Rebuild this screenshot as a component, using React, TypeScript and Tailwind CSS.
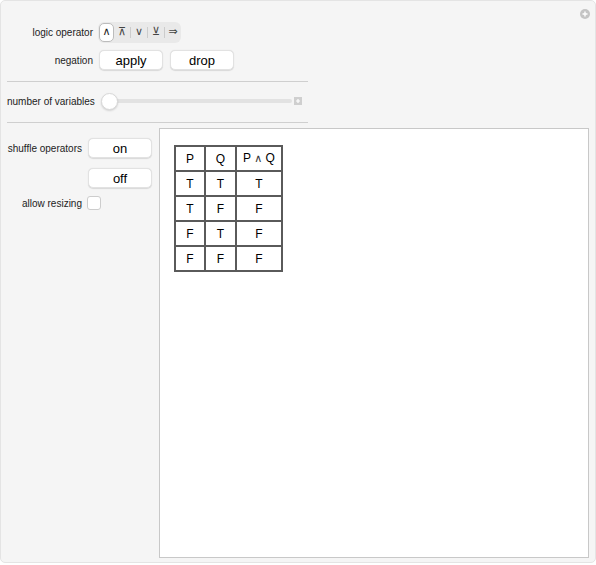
import React from "react";

const ops = ["∧", "⊼", "∨", "⊻", "⇒"];

function Btn({ children }: { children: React.ReactNode }) {
  return (
    <div className="w-[64px] h-[20px] bg-white rounded-[5px] border border-[#e2e2e2] shadow-[0_0.5px_1px_rgba(0,0,0,0.12)] flex items-center justify-center text-[13px] text-black leading-none">
      {children}
    </div>
  );
}

const rows: React.ReactNode[][] = [
  [
    "P",
    "Q",
    <span key="h">
      P <span className="text-[11px] text-[#333]" style={{ fontFamily: '"DejaVu Sans", sans-serif' }}>∧</span> Q
    </span>,
  ],
  ["T", "T", "T"],
  ["T", "F", "F"],
  ["F", "T", "F"],
  ["F", "F", "F"],
];

export default function App() {
  return (
    <div className="w-[596px] h-[565px] bg-white" style={{ fontFamily: '"Liberation Sans", Arial, "DejaVu Sans", sans-serif' }}>
      <div className="relative w-[596px] h-[563px] rounded-[5px] border border-[#e4e4e4] bg-[#f5f5f5] flex flex-col">
        <div className="absolute right-[5px] top-[8px] w-[10px] h-[10px] rounded-full bg-[#c4c4c4] flex items-center justify-center">
          <svg width="6" height="6" viewBox="0 0 6 6"><path d="M3 0.5v5M0.5 3h5" stroke="white" strokeWidth="1.4" /></svg>
        </div>
        <div className="pl-[5px] pt-[21px] w-[307px]">
          <div className="flex items-center h-[21px]">
            <div className="w-[87px] text-right text-[10px] text-[#222]">logic operator</div>
            <div className="ml-[5px] h-[21px] w-[83px] rounded-[6px] bg-[#e9e9e9] flex items-center pl-[1px] text-[11px] text-[#444]">
              {ops.map((o, i) => (
                <React.Fragment key={i}>
                  {i >= 2 && <div className="w-px h-[11px] bg-[#cccccc]" />}
                  <div
                    className={
                      i === 0
                        ? "w-[15px] h-[19px] rounded-[5px] bg-white border border-[#bcbcbc] flex items-center justify-center text-[#222]"
                        : "flex-1 h-[19px] flex items-center justify-center"
                    }
                    style={{ fontFamily: '"DejaVu Sans", sans-serif' }}
                  >
                    {o}
                  </div>
                </React.Fragment>
              ))}
            </div>
          </div>
          <div className="flex items-center h-[20px] mt-[7px]">
            <div className="w-[87px] text-right text-[10px] text-[#222]">negation</div>
            <div className="ml-[6px] flex gap-[7px]">
              <Btn>apply</Btn>
              <Btn>drop</Btn>
            </div>
          </div>
          <div className="mt-[11px] ml-[1px] h-px w-[301px] bg-[#cfcfcf]" />
          <div className="flex items-center h-[20px] mt-[9px] pl-[1px]">
            <div className="text-[10px] text-[#222]">number of variables</div>
            <div className="relative ml-[6px] w-[201px] h-[20px] flex items-center">
              <div className="absolute left-[3px] right-[10px] h-[4px] rounded-full bg-[#e2e2e2]" />
              <div className="absolute left-0 w-[17px] h-[17px] rounded-full bg-white border border-[#d8d8d8] shadow-[0_1px_2px_rgba(0,0,0,0.15)]" />
              <div className="absolute right-0 w-[8px] h-[8px] bg-[#cfcfcf] flex items-center justify-center">
                <svg width="6" height="6" viewBox="0 0 6 6"><path d="M3 1v4M1 3h4" stroke="white" strokeWidth="1.2" /></svg>
              </div>
            </div>
          </div>
          <div className="mt-[11px] ml-[1px] h-px w-[301px] bg-[#cfcfcf]" />
        </div>
        <div className="flex pt-[5px] pl-[5px]">
          <div className="w-[153px] pt-[10px]">
            <div className="flex items-center h-[20px]">
              <div className="w-[76px] text-right text-[10px] text-[#222]">shuffle operators</div>
              <div className="ml-[6px]"><Btn>on</Btn></div>
            </div>
            <div className="flex items-center h-[20px] mt-[10px]">
              <div className="w-[76px]" />
              <div className="ml-[6px]"><Btn>off</Btn></div>
            </div>
            <div className="flex items-center h-[14px] mt-[8px]">
              <div className="w-[76px] text-right text-[10px] text-[#222]">allow resizing</div>
              <div className="ml-[5px] w-[14px] h-[14px] rounded-[3px] bg-white border border-[#cdcdcd]" />
            </div>
          </div>
          <div className="w-[430px] h-[430px] bg-white border border-[#c8c8c8] pl-[14px] pt-[16px]">
            <div className="border-l-2 border-t-2 border-[#5a5a5a] w-fit">
              {rows.map((r, i) => (
                <div key={i} className="flex">
                  {r.map((c, j) => (
                    <div
                      key={j}
                      className={`h-[25px] border-r-2 border-b-2 border-[#5a5a5a] flex items-center justify-center text-[12px] text-black ${j === 0 ? "w-[30px]" : j === 1 ? "w-[31px]" : "w-[46px]"}`}
                    >
                      {c}
                    </div>
                  ))}
                </div>
              ))}
            </div>
          </div>
        </div>
      </div>
    </div>
  );
}
